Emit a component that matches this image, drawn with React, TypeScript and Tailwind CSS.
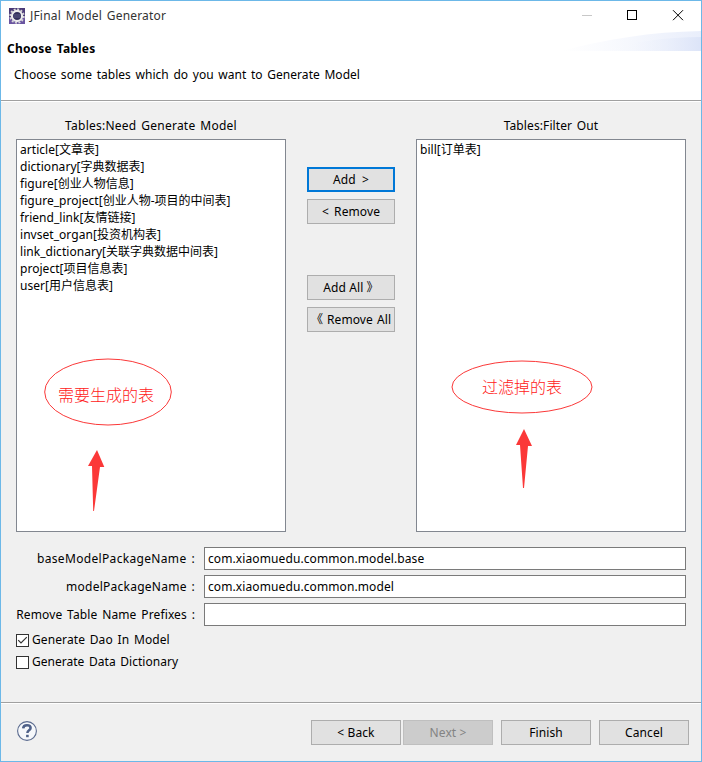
import { useState } from "react";
import type { ReactNode } from "react";
import clsx from "clsx";

type Table = { name: string; remark: string };

const needTables: Table[] = [
  { name: "article", remark: "文章表" },
  { name: "dictionary", remark: "字典数据表" },
  { name: "figure", remark: "创业人物信息" },
  { name: "figure_project", remark: "创业人物-项目的中间表" },
  { name: "friend_link", remark: "友情链接" },
  { name: "invset_organ", remark: "投资机构表" },
  { name: "link_dictionary", remark: "关联字典数据中间表" },
  { name: "project", remark: "项目信息表" },
  { name: "user", remark: "用户信息表" },
];

const filterTables: Table[] = [{ name: "bill", remark: "订单表" }];

const TitleBar = () => (
  <div className="flex h-[29px] shrink-0 items-center bg-white pl-2">
    <svg width="16" height="16" viewBox="0 0 16 16">
      <rect width="16" height="16" fill="#4a3a78" />
      <rect y="9" width="16" height="7" fill="#6a55a0" />
      <circle cx="8" cy="8" r="6.8" fill="none" stroke="#d8d8d8" strokeWidth="1.8" strokeDasharray="2 1.56" />
      <circle cx="8" cy="8" r="5.1" fill="#33305c" stroke="#ececec" strokeWidth="2.1" />
      <path d="M4.4 7h7.2M4.4 9h7.2" stroke="#5d5a86" />
    </svg>
    <span className="ml-[5px] flex-1 tracking-[0.18px] text-[#333]">JFinal Model Generator</span>
    <svg width="120" height="29" viewBox="0 0 120 29" fill="none" shapeRendering="crispEdges">
      <path d="M1 14.5h10" stroke="#c8c8c8" />
      <path d="M46.5 9.5h9v9h-9z" stroke="#000" />
      <path d="M92 9.2l10 10M102 9.2l-10 10" stroke="#000" shapeRendering="auto" />
    </svg>
  </div>
);

const Banner = () => (
  <div className="h-[72px] shrink-0 border-b border-white">
    <div className="flex h-[71px] justify-between border-b border-[#a0a0a0] bg-white">
      <div className="flex flex-col pl-1.5 pt-[10px]">
        <span className="font-bold leading-[18px] tracking-[0.2px]">Choose Tables</span>
        <span className="mt-2 pl-[7px] leading-[18px] tracking-[0.03px]">
          Choose some tables which do you want to Generate Model
        </span>
      </div>
      <svg width="140" height="22" viewBox="0 0 140 22">
        <defs>
          <linearGradient id="outer">
            <stop offset="0" stopColor="#fff" />
            <stop offset="0.3" stopColor="#fafbfe" />
            <stop offset="1" stopColor="#e9eefb" />
          </linearGradient>
          <linearGradient id="inner">
            <stop offset="0" stopColor="#fff" stopOpacity="0" />
            <stop offset="1" stopColor="#dce4f8" />
          </linearGradient>
        </defs>
        <path d="M0 21C45 9 90 2 140 1V21z" fill="url(#outer)" />
        <path d="M40 21C70 12 105 7 140 7V21z" fill="url(#inner)" />
      </svg>
    </div>
  </div>
);

const TableList = ({
  title,
  titleClass,
  tables,
  children,
}: {
  title: string;
  titleClass?: string;
  tables: Table[];
  children?: ReactNode;
}) => (
  <div className="flex w-[270px] flex-col">
    <div className={clsx("h-[22px] text-center leading-[18px]", titleClass)}>{title}</div>
    <ul className="relative h-[393px] border border-[#828790] bg-white pl-[3px] pt-[1px]">
      {tables.map((table) => (
        <li key={table.name} className="flex h-[17px] whitespace-pre leading-[17px] tracking-[0.04px]">
          <span>{table.name}[</span>
          <span className="tracking-normal">{table.remark}</span>
          <span>]</span>
        </li>
      ))}
      {children}
    </ul>
  </div>
);

const Button = ({
  children,
  className,
  disabled,
}: {
  children: ReactNode;
  className?: string;
  disabled?: boolean;
}) => (
  <button
    disabled={disabled}
    className={clsx(
      "flex h-[25px] shrink-0 items-center justify-center whitespace-pre",
      disabled ? "border border-[#bfbfbf] bg-[#ccc] text-[#838383]" : "bg-[#e1e1e1]",
      className
    )}
  >
    {children}
  </button>
);

const Field = ({ label, labelClass, value }: { label: string; labelClass: string; value: string }) => (
  <label className="flex h-[23px] items-center">
    <span className={clsx("mr-[9px] w-[179px] whitespace-nowrap text-right", labelClass)}>{label}</span>
    <input
      defaultValue={value}
      className="h-[23px] flex-1 border border-[#7a7a7a] bg-white pl-[3px] tracking-[0.1px] outline-none"
    />
  </label>
);

const Check = ({ label, labelClass, initial }: { label: string; labelClass?: string; initial: boolean }) => {
  const [checked, setChecked] = useState(initial);
  return (
    <div className="flex h-[22px] items-center" onClick={() => setChecked(!checked)}>
      <span className="mr-[3px] h-[13px] w-[13px] border border-[#333] bg-white">
        {checked && (
          <svg width="11" height="11" viewBox="0 0 11 11" fill="none">
            <path d="M1.2 5.2l2.8 2.8 5.8-5.8" stroke="#333" strokeWidth="1.2" />
          </svg>
        )}
      </span>
      <span className={labelClass}>{label}</span>
    </div>
  );
};

export default function App() {
  return (
    <div className="flex h-[762px] w-[702px] flex-col overflow-hidden border border-[#6cb8e8] bg-[#f0f0f0] font-['Noto_Sans','Noto_Sans_CJK_SC',sans-serif] text-[12px] tracking-[0.1px] text-black [word-spacing:1.5px]">
      <TitleBar />
      <Banner />

      <div className="flex justify-between px-[15px] pt-[15px]">
        <TableList title="Tables:Need Generate Model" titleClass="tracking-[0.24px]" tables={needTables}>
          {/* red marks drawn over the list */}
          <svg className="absolute left-0 top-0" width="268" height="391" viewBox="17 140 268 391">
            <ellipse cx="108" cy="392" rx="63.3" ry="33" fill="none" stroke="#fb3838" />
            <path d="M97 450l7.3 17H100l-6 44h-.8L92 466h-4z" fill="#fb3838" />
          </svg>
          <span className="absolute left-[41px] top-[243px] text-[16px] font-light leading-6 tracking-normal text-[#ff2020]">
            需要生成的表
          </span>
        </TableList>

        <div className="flex w-[88px] flex-col pt-[50px]">
          <Button className="border-2 border-[#0078d7] [word-spacing:3px]">Add &gt;</Button>
          <Button className="mt-[7px] border border-[#adadad] [word-spacing:2px]">&lt; Remove</Button>
          <Button className="mt-[51px] border border-[#adadad]">Add All 》</Button>
          <Button className="mt-[7px] border border-[#adadad] [word-spacing:0.8px]">《 Remove All</Button>
        </div>

        <TableList title="Tables:Filter Out" tables={filterTables}>
          <svg className="absolute left-0 top-0" width="268" height="391" viewBox="417 140 268 391">
            <ellipse cx="522" cy="387" rx="70" ry="26" fill="none" stroke="#fb3838" />
            <path d="M524 429l8 17h-4l-4 42h-1l-3-43h-4z" fill="#fb3838" />
          </svg>
          <span className="absolute left-[65px] top-[235px] text-[16px] font-light leading-6 tracking-normal text-[#ff2020]">
            过滤掉的表
          </span>
        </TableList>
      </div>

      <div className="flex flex-col gap-[5px] px-[15px] pt-[15px]">
        <Field
          label="baseModelPackageName :"
          labelClass="tracking-[0.33px]"
          value="com.xiaomuedu.common.model.base"
        />
        <Field label="modelPackageName :" labelClass="tracking-[0.25px]" value="com.xiaomuedu.common.model" />
        <Field label="Remove Table Name Prefixes :" labelClass="tracking-[0.13px]" value="" />
      </div>
      <div className="flex flex-col pl-[15px] pt-[3px]">
        <Check label="Generate Dao In Model" initial={true} />
        <Check label="Generate Data Dictionary" labelClass="tracking-[0.02px]" initial={false} />
      </div>

      <div className="mt-auto flex h-[59px] shrink-0 border-t border-[#a0a0a0]">
        <div className="flex flex-1 border-t border-white pl-[15px] pr-3 pt-4">
          <svg width="22" height="22" viewBox="0 0 22 22" fill="none">
            <circle cx="11" cy="11" r="9.4" fill="#f6f8fb" stroke="#5a6a8e" strokeWidth="1.1" />
            <path
              d="M7.2 8.4C7.3 6.200 8.800 5.300 11 5.300c2.300 0 3.600 1 3.600 2.700 0 2.400-3.200 2.300-3.200 5"
              stroke="#4f6189"
              strokeWidth="2.5"
            />
            <path d="M10.100 14.800h2.600v2.400h-2.600z" fill="#4f6189" />
          </svg>
          <div className="ml-auto flex [word-spacing:2px]">
            <Button className="w-[90px] border border-[#adadad]">&lt; Back</Button>
            <Button className="ml-0.5 w-[90px]" disabled>
              Next &gt;
            </Button>
            <Button className="ml-2 w-[90px] border border-[#adadad]">Finish</Button>
            <Button className="ml-2 w-[90px] border border-[#adadad]">Cancel</Button>
          </div>
        </div>
      </div>
    </div>
  );
}
